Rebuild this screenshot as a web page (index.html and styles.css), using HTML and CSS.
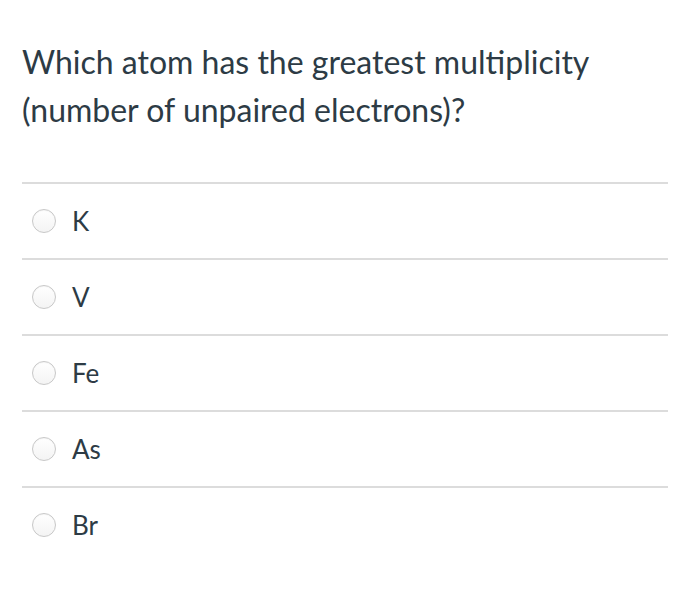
FILE: index.html
```html
<!DOCTYPE html>
<html>
<head>
<meta charset="utf-8">
<link rel="stylesheet" href="styles.css">
</head>
<body>
<div class="question">
  <p class="prompt">Which atom has the greatest multiplicity (number of unpaired electrons)?</p>
  <div class="answers">
    <label class="answer"><span class="radio"></span><span class="text">K</span></label>
    <label class="answer"><span class="radio"></span><span class="text">V</span></label>
    <label class="answer"><span class="radio"></span><span class="text">Fe</span></label>
    <label class="answer"><span class="radio"></span><span class="text">As</span></label>
    <label class="answer"><span class="radio"></span><span class="text">Br</span></label>
  </div>
</div>
</body>
</html>
```

FILE: styles.css
```css
html, body {
  margin: 0;
  padding: 0;
  background: #fff;
}
body {
  font-family: Lato, "Open Sans", sans-serif;
  color: #2d3b45;
}
.question {
  padding: 38px 28px 0 22px;
}
.prompt {
  margin: 0;
  font-size: 32px;
  line-height: 48px;
  width: 620px;
}
.answers {
  margin-top: 48px;
}
.answer {
  display: flex;
  align-items: center;
  height: 74px;
  border-top: 2px solid #dcdcdc;
}
.radio {
  width: 22px;
  height: 22px;
  border: 1px solid #c8c8c8;
  border-radius: 50%;
  background: linear-gradient(#fff, #f4f4f4);
  margin-left: 10px;
  margin-right: 16px;
  box-shadow: inset 0 1px 1px rgba(0,0,0,0.04);
}
.text {
  font-size: 26px;
}
```
